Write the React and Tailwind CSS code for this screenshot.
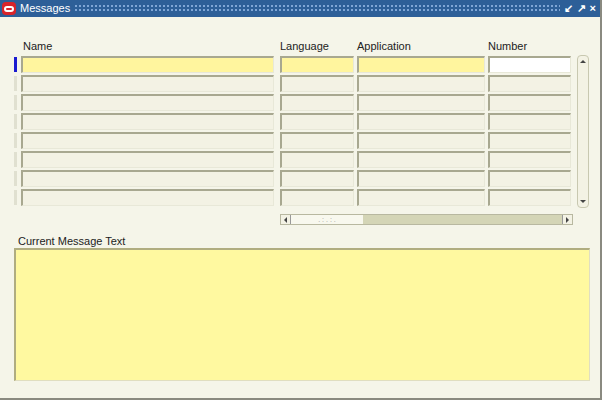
const rows = [0, 1, 2, 3, 4, 5, 6, 7];

const Cell = ({ w, bg = "bg-[#f3f2e4]" }) => (
  <div className={`${w} h-[17px] ${bg} border-t-2 border-l-2 border-[#a8a890] border-b border-r border-b-[#e8e8d8] border-r-[#e8e8d8]`} />
);

const Tri = ({ dir }) => {
  const cls = {
    up: "border-l-[3px] border-r-[3px] border-b-[3px] border-l-transparent border-r-transparent border-b-[#444]",
    down: "border-l-[3px] border-r-[3px] border-t-[3px] border-l-transparent border-r-transparent border-t-[#444]",
    left: "border-t-[3px] border-b-[3px] border-r-[3px] border-t-transparent border-b-transparent border-r-[#444]",
    right: "border-t-[3px] border-b-[3px] border-l-[3px] border-t-transparent border-b-transparent border-l-[#444]",
  }[dir];
  return <div className={`w-0 h-0 ${cls}`} />;
};

export default function App() {
  return (
    <div
      className="w-[613px] h-[404px] bg-white text-[11px] text-[#222]"
      style={{ fontFamily: '"Liberation Sans", Arial, sans-serif' }}
    >
      <div className="w-[602px] h-[400px] flex flex-col bg-[#f5f5e9] border-r-2 border-b-2 border-[#8a8a80]">
        <div className="h-[17px] bg-[#2d5f98] flex items-center pl-[2px] pr-[4px] gap-[4px]">
          <div className="w-[14px] h-[13px] bg-[#d8242a] rounded-sm flex items-center justify-center">
            <div className="w-[10px] h-[6px] border-2 border-white rounded-full" />
          </div>
          <span className="text-white text-[11px]">Messages</span>
          <div
            className="flex-1 h-[9px]"
            style={{
              backgroundImage: "radial-gradient(circle, #7fa6d6 0.8px, transparent 1px)",
              backgroundSize: "4px 4px",
            }}
          />
          <span className="text-white text-[11px] font-bold flex gap-[4px]">
            <span>↙</span><span>↗</span><span>×</span>
          </span>
        </div>

        <div className="flex pl-[14px] pt-[22px]">
          <div className="flex flex-col">
            <div className="flex h-[16px] items-end pb-[1px]">
              <span className="w-[266px] pl-[9px]">Name</span>
              <span className="w-[77px]">Language</span>
              <span className="w-[131px]">Application</span>
              <span>Number</span>
            </div>
            {rows.map((r) => (
              <div key={r} className="flex items-center h-[19px]">
                <div className={`w-[3px] h-[15px] mr-[4px] ${r === 0 ? "bg-[#1a1ad0]" : "bg-[#e0e0d0]"}`} />
                <Cell w="w-[253px]" bg={r === 0 ? "bg-[#fff59e]" : undefined} />
                <div className="w-[6px]" />
                <Cell w="w-[74px]" bg={r === 0 ? "bg-[#fff59e]" : undefined} />
                <div className="w-[3px]" />
                <Cell w="w-[128px]" bg={r === 0 ? "bg-[#fff59e]" : undefined} />
                <div className="w-[3px]" />
                <Cell w="w-[83px]" bg={r === 0 ? "bg-white" : undefined} />
              </div>
            ))}
            <div className="ml-[266px] mt-[7px] w-[293px] h-[11px] flex border border-[#b8b8a0] bg-[#d4d5b6]">
              <div className="w-[10px] bg-[#f3f2e4] border-r border-[#999] flex items-center justify-center"><Tri dir="left" /></div>
              <div className="w-[72px] bg-[#f8f8ee] text-[7px] leading-[9px] text-center text-[#999]">. : . : .</div>
              <div className="flex-1" />
              <div className="w-[10px] bg-[#f3f2e4] border-l border-[#999] flex items-center justify-center"><Tri dir="right" /></div>
            </div>
          </div>
          <div className="ml-[4px] mt-[16px] w-[12px] h-[153px] border border-[#c8c8b0] rounded-sm bg-[#f3f2e4] flex flex-col justify-between items-center py-[4px]">
            <Tri dir="up" />
            <Tri dir="down" />
          </div>
        </div>

        <div className="pl-[18px] mt-[10px] leading-[12px]">Current Message Text</div>
        <div className="ml-[14px] mt-[1px] w-[576px] h-[133px] bg-[#fff9a0] border-t-2 border-l-2 border-[#b0ad80] border-b border-r border-b-[#e0dec0] border-r-[#e0dec0]" />
      </div>
    </div>
  );
}
